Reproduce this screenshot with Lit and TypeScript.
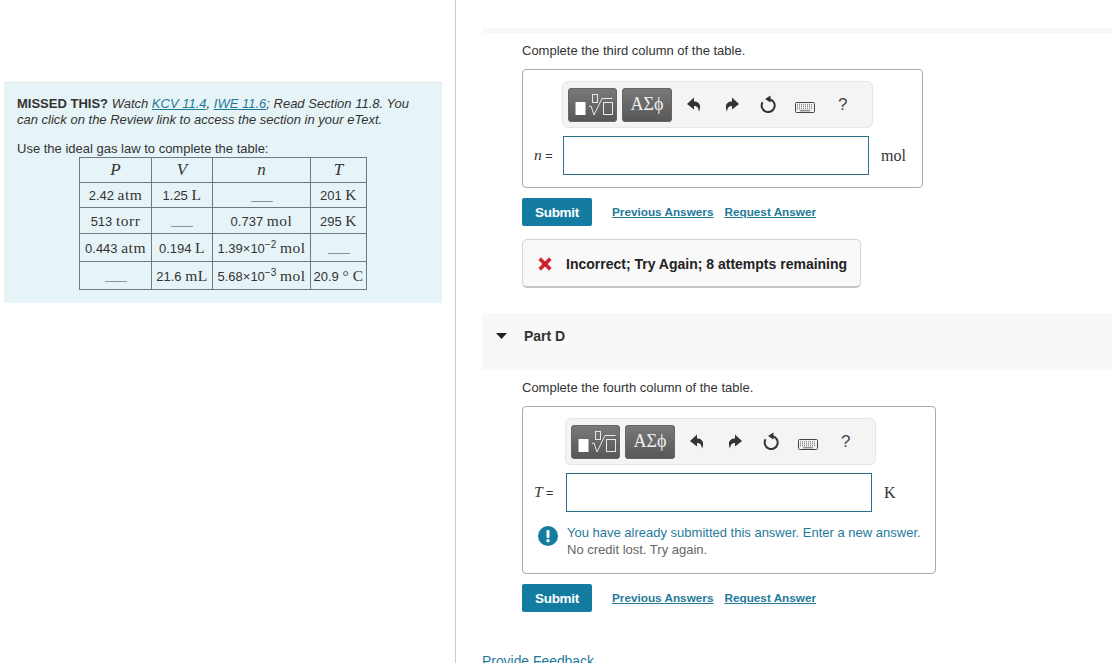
import { LitElement, html, css } from "lit";
import { customElement } from "lit/decorators.js";

const blank = html`<span class="blank"></span>`;
const unit = (t: string) => html`<span class="unit">${t}</span>`;

const toolbar = html`
  <div class="toolbar">
    <div class="tbtn">
      <svg width="49" height="34" viewBox="0 0 49 34">
        <rect x="7.5" y="14" width="10" height="13" fill="#fff"></rect>
        <rect x="24.5" y="6.5" width="5" height="8" fill="none" stroke="#e8e8e8" stroke-width="1"></rect>
        <path d="M21 18.5 L23 18 L26 27 L34 10.5 H44.5" fill="none" stroke="#e8e8e8" stroke-width="1"></path>
        <rect x="35.5" y="14.5" width="9" height="12" fill="none" stroke="#e8e8e8" stroke-width="1"></rect>
      </svg>
    </div>
    <div class="tbtn greek">ΑΣϕ</div>
    <svg class="ic undo" width="14" height="15" viewBox="0 0 14 15"><path d="M7 0.5 L0 7 L7 12.5 V9 C10 9 11.5 10.5 12 14.8 C14.8 8 12 4.5 7 4.5 Z" fill="#333"></path></svg>
    <svg class="ic redo" width="14" height="15" viewBox="0 0 14 15"><path d="M7 0.5 L14 7 L7 12.5 V9 C4 9 2.5 10.5 2 14.8 C-0.8 8 2 4.5 7 4.5 Z" fill="#333"></path></svg>
    <svg class="ic reset" width="16" height="18" viewBox="0 0 16 18"><path d="M9.5 4.2 A6.5 6.5 0 1 1 2.6 7.2" fill="none" stroke="#333" stroke-width="2"></path><path d="M5 4 L10.5 0.5 V7.5 Z" fill="#333"></path></svg>
    <svg class="ic kb" width="20" height="11" viewBox="0 0 20 11">
      <rect x="0.5" y="0.5" width="19" height="10" rx="1" fill="#f2f2f2" stroke="#444"></rect>
      <path d="M2 2.8 H18 M2 4.8 H18 M2 6.8 H18" stroke="#666" stroke-width="1" stroke-dasharray="1 1"></path>
      <path d="M5 8.8 H15" stroke="#666" stroke-width="1"></path>
    </svg>
    <span class="q">?</span>
  </div>`;

const actions = html`
  <div class="actions">
    <button class="submit">Submit</button>
    <a class="alink first">Previous Answers</a>
    <a class="alink">Request Answer</a>
  </div>`;

@customElement("app-root")
export class AppRoot extends LitElement {
  static styles = css`
    :host { display: block; width: 1112px; height: 663px; overflow: hidden; background: #fff;
      font-family: "Liberation Sans", Arial, sans-serif; color: #333; font-size: 13px; }
    .page { display: flex; height: 663px; overflow: hidden; }
    .left { flex: none; width: 438px; border-right: 1px solid #ccc; padding: 82px 13px 0 4px; }
    .hint { background: #e7f4f7; border-top: 1px solid #e2e6e8; height: 221px; padding: 13px 13px 0 13px; box-sizing: border-box; }
    .hint p { margin: 0; line-height: 16px; font-size: 13px; color: #333; }
    .hint em a { color: #1f7a9a; text-decoration: underline; }
    .intro { margin-top: 13px !important; line-height: 15px !important; }
    table { border-collapse: collapse; margin: 1px 0 0 62px; table-layout: fixed; width: 288px; }
    td, th { border: 1px solid #6d7a80; padding: 0; text-align: center; font-weight: 400; font-size: 13px; color: #333; vertical-align: middle; white-space: nowrap; }
    .w1 { width: 72px; } .w2 { width: 61px; } .w3 { width: 98px; } .w4 { width: 56px; }
    th { height: 24px; font-family: "Liberation Serif", serif; font-style: italic; font-size: 17px; }
    .h1 td { height: 24px; } .h2 td { height: 25px; } .h3 td, .h4 td { height: 27px; }
    .unit { font-family: "Liberation Serif", serif; font-size: 15.5px; letter-spacing: 0.5px; }
    sup { font-size: 10px; line-height: 0; }
    .blank { display: inline-block; width: 22px; height: 1px; background: #8a9599; vertical-align: -2px; }
    .right { flex: 1; min-width: 0; padding: 28px 0 0 26px; }
    .band { height: 5px; background: #f8f8f8; }
    .task { margin: 10px 0 0 40px; line-height: 15px; }
    .box { margin: 11px 0 0 40px; border: 1px solid #aaa; border-radius: 4px; box-sizing: border-box; display: grid; align-items: center; }
    .box.c { width: 401px; height: 119px; grid-template-columns: 40px 306px auto; align-content: start; padding-top: 11px; }
    .box.t { width: 414px; height: 168px; grid-template-columns: 43px 306px auto; align-content: start; padding-top: 11px; }
    .lab { grid-column: 1; padding-left: 11px; font-size: 12.5px; white-space: nowrap; }
    .lab i { font-family: "Liberation Serif", serif; font-size: 15.5px; }
    .toolbar { grid-column: 2; margin-left: -1px; width: 311px; height: 47px; box-sizing: border-box; background: #f4f4f4; border: 1px solid #e6e6e6; border-radius: 6px; display: flex; align-items: center; padding-left: 5px; position: relative; }
    .tbtn { width: 49px; height: 34px; border-radius: 4px; background: linear-gradient(#7a7a7a, #565656); display: flex; align-items: center; justify-content: center; color: #eee; flex: none; margin-right: 5px; box-shadow: inset 0 0 0 1px #666; }
    .tbtn svg { display: block; }
    .greek { font-family: "Liberation Serif", serif; font-size: 18px; width: 50px; }
    .ic { flex: none; display: block; }
    .undo { margin-left: 10px; }
    .redo { margin-left: 24px; }
    .reset { margin-left: 21px; margin-top: -1px; }
    .kb { margin-left: 19px; margin-top: 5px; }
    .q { margin-left: 23px; font-size: 17px; color: #444; margin-top: 0; }
    .inp { grid-column: 2; height: 39px; margin-top: 8px; border: 1px solid #2b7089; box-sizing: border-box; background: #fff; }
    .lab.row { margin-top: 6px; }
    .u { grid-column: 3; margin-top: 8px; padding-left: 12px; font-family: "Liberation Serif", serif; font-size: 16px; color: #333; }
    .msg { grid-column: 1 / 4; display: flex; margin: 12px 0 0 15px; gap: 9px; align-items: flex-start; }
    .msg svg { flex: none; margin-top: 2px; display: block; }
    .msg div { line-height: 17px; font-size: 13px; color: #666; white-space: nowrap; }
    .msg span { color: #1f7a9a; }
    .actions { display: flex; align-items: center; margin: 10px 0 0 40px; height: 28px; }
    .submit { width: 70px; height: 28px; background: #137ca0; color: #fff; border: 0; border-radius: 2px; font: 700 13.5px "Liberation Sans", Arial, sans-serif; padding: 0; letter-spacing: -0.3px; }
    .alink { color: #1f7a9a; font-weight: 700; font-size: 11.75px; text-decoration: underline; margin-left: 11px; margin-top: -2px; white-space: nowrap; }
    .alink.first { margin-left: 20px; }
    .fb { margin: 13px 0 0 40px; width: 339px; height: 49px; box-sizing: border-box; background: #f9f9f9; border: 1px solid #d4d4d4; border-bottom: 2px solid #c4c4c4; border-radius: 5px; display: flex; align-items: center; padding: 1px 0 0 14px; font-weight: 700; font-size: 14px; color: #222; white-space: nowrap; }
    .fb svg { margin-right: 13px; flex: none; }
    .part { margin-top: 25px; height: 57px; background: #f8f8f8; display: flex; align-items: flex-start; font-weight: 700; font-size: 14px; line-height: 16px; padding: 15px 0 0 14px; box-sizing: border-box; color: #333; }
    .part svg { margin: 5px 17px 0 0; display: block; }
    .pfb { margin-top: 42px; color: #1f7a9a; font-size: 13.9px; line-height: 15px; }
  `;

  render() {
    return html`
      <div class="page">
        <div class="left">
          <div class="hint">
            <p><b>MISSED THIS?</b> <em>Watch <a>KCV 11.4</a>, <a>IWE 11.6</a>; Read Section 11.8. You can click on the Review link to access the section in your eText.</em></p>
            <p class="intro">Use the ideal gas law to complete the table:</p>
            <table>
              <colgroup>
                <col class="w1" /><col class="w2" /><col class="w3" /><col class="w4" />
              </colgroup>
              <tr><th>P</th><th>V</th><th>n</th><th>T</th></tr>
              <tr class="h1"><td>2.42 ${unit("atm")}</td><td>1.25 ${unit("L")}</td><td>${blank}</td><td>201 ${unit("K")}</td></tr>
              <tr class="h2"><td>513 ${unit("torr")}</td><td>${blank}</td><td>0.737 ${unit("mol")}</td><td>295 ${unit("K")}</td></tr>
              <tr class="h3"><td>0.443 ${unit("atm")}</td><td>0.194 ${unit("L")}</td><td>1.39×10<sup>−2</sup> ${unit("mol")}</td><td>${blank}</td></tr>
              <tr class="h4"><td>${blank}</td><td>21.6 ${unit("mL")}</td><td>5.68×10<sup>−3</sup> ${unit("mol")}</td><td>20.9 ${unit("°\u2009C")}</td></tr>
            </table>
          </div>
        </div>
        <div class="right">
          <div class="band"></div>
          <div class="task">Complete the third column of the table.</div>
          <div class="box c">
            ${toolbar}
            <div class="lab row"><i>n</i> =</div>
            <div class="inp"></div>
            <div class="u">mol</div>
          </div>
          ${actions}
          <div class="fb">
            <svg width="16" height="16" viewBox="0 0 14 14"><path d="M1.5 3.5 L3.5 1.5 L7 5 L10.5 1.5 L12.5 3.5 L9 7 L12.5 10.5 L10.5 12.5 L7 9 L3.5 12.5 L1.5 10.5 L5 7 Z" fill="#d0202e" stroke="#d0202e" stroke-width="0.6"></path></svg>
            Incorrect; Try Again; 8 attempts remaining
          </div>
          <div class="part">
            <svg width="11" height="6" viewBox="0 0 11 6"><path d="M0 0 H11 L5.5 6 Z" fill="#222"></path></svg>
            Part D
          </div>
          <div class="task">Complete the fourth column of the table.</div>
          <div class="box t">
            ${toolbar}
            <div class="lab row"><i>T</i> =</div>
            <div class="inp"></div>
            <div class="u">K</div>
            <div class="msg">
              <svg width="20" height="20" viewBox="0 0 20 20"><circle cx="10" cy="10" r="10" fill="#137ca0"></circle><rect x="8.5" y="4" width="3" height="8" rx="1.2" fill="#fff"></rect><circle cx="10" cy="14.8" r="1.7" fill="#fff"></circle></svg>
              <div><span>You have already submitted this answer. Enter a new answer.</span><br />No credit lost. Try again.</div>
            </div>
          </div>
          ${actions}
          <div class="pfb">Provide Feedback</div>
        </div>
      </div>
    `;
  }
}
